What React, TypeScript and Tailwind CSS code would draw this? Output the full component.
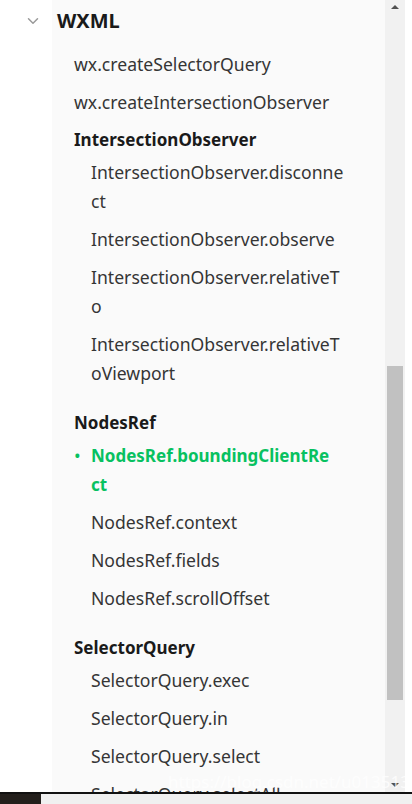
import { ChevronDown } from "lucide-react";

// lines are given as the reference wraps them (break-all in a narrow sidebar)
type Item = { lines: string[]; active?: boolean };
type Group = { title: string; items: Item[] };

const topItems = ["wx.createSelectorQuery", "wx.createIntersectionObserver"];

const groups: Group[] = [
  {
    title: "IntersectionObserver",
    items: [
      { lines: ["IntersectionObserver.disconne", "ct"] },
      { lines: ["IntersectionObserver.observe"] },
      { lines: ["IntersectionObserver.relativeT", "o"] },
      { lines: ["IntersectionObserver.relativeT", "oViewport"] },
    ],
  },
  {
    title: "NodesRef",
    items: [
      { lines: ["NodesRef.boundingClientRe", "ct"], active: true },
      { lines: ["NodesRef.context"] },
      { lines: ["NodesRef.fields"] },
      { lines: ["NodesRef.scrollOffset"] },
    ],
  },
  {
    title: "SelectorQuery",
    items: [
      { lines: ["SelectorQuery.exec"] },
      { lines: ["SelectorQuery.in"] },
      { lines: ["SelectorQuery.select"] },
      { lines: ["SelectorQuery.selectAll"] },
    ],
  },
];

const NavItem = ({ item }: { item: Item }) => (
  <li className="relative pl-[39px] pr-[8px] py-[4.5px]">
    {item.active && (
      <span className="absolute left-[22px] top-[4.5px] leading-[29px] text-[#07c160]">•</span>
    )}
    {item.lines.map((l, i) => (
      <span
        key={i}
        className={`block leading-[29px] whitespace-nowrap ${
          item.active ? "text-[#07c160] font-bold text-[17px]" : "text-[#353535]"
        }`}
      >
        {l}
      </span>
    ))}
  </li>
);

export default function App() {
  return (
    <div
      className="h-[804px] w-[412px] overflow-hidden flex flex-col bg-white text-[17.6px]"
      style={{ fontFamily: '"Noto Sans", "Open Sans", sans-serif' }}
    >
      <div className="flex h-[792px] relative">
        {/* chevron column */}
        <div className="w-[52px] shrink-0 bg-white pt-[12px] pl-[24px]">
          <ChevronDown className="w-[18px] h-[18px] text-[#9a9a9a]" strokeWidth={2} />
        </div>

        {/* nav panel */}
        <div className="flex-1 bg-[#fafafa] overflow-hidden">
          <div className="pl-[5px] pt-[4px] text-[20px] font-bold leading-[34px] text-[#1a1a1a]">WXML</div>
          <ul className="pt-[7px]">
            {topItems.map((t) => (
              <li key={t} className="pl-[22px] py-[4.5px] leading-[29px] text-[#353535]">
                {t}
              </li>
            ))}
          </ul>
          {groups.map((g, i) => (
            <div key={g.title} className={i === 0 ? "" : "mt-[12px]"}>
              <div className="pl-[22px] pt-[6px] leading-[26px] font-bold text-[17px] text-[#1a1a1a]">
                {g.title}
              </div>
              <ul>
                {g.items.map((it) => (
                  <NavItem key={it.lines.join("")} item={it} />
                ))}
              </ul>
            </div>
          ))}
        </div>

        {/* scrollbar */}
        <div className="w-[20px] shrink-0 bg-[#f1f1f1] flex flex-col items-center">
          <div className="h-[14px] flex items-center justify-center">
            <div className="w-0 h-0 border-l-[4px] border-r-[4px] border-b-[4px] border-l-transparent border-r-transparent border-b-[#505050]" />
          </div>
          <div className="flex-1 w-full px-[2px] flex flex-col">
            <div className="h-[352px]" />
            <div className="h-[334px] bg-[#c1c1c1]" />
          </div>
          <div className="h-[14px] flex items-center justify-center">
            <div className="w-0 h-0 border-l-[4px] border-r-[4px] border-t-[4px] border-l-transparent border-r-transparent border-t-[#505050]" />
          </div>
        </div>
        <div className="w-[7px] shrink-0 bg-white" />

        {/* watermark */}
        <span className="absolute left-[168px] bottom-[-2px] text-[17px] text-white/75 pointer-events-none whitespace-nowrap">
          https://blog.csdn.net/u013513053
        </span>
      </div>

      {/* bottom bar */}
      <div className="h-[2px] bg-[#111]" />
      <div className="flex-1 flex bg-[#f0f0f0]">
        <div className="w-[41px] bg-[#231f1c]" />
      </div>
    </div>
  );
}
